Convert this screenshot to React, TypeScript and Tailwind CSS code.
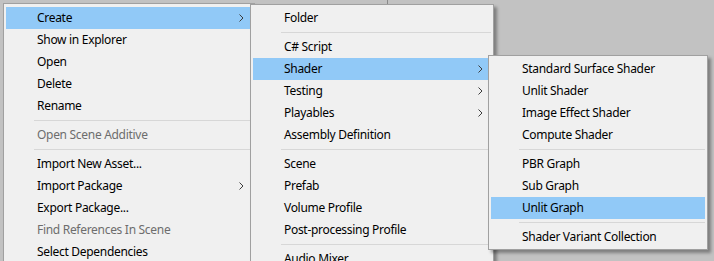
type Item = { label: string; sub?: boolean; disabled?: boolean; active?: boolean } | "sep"

const mainItems: Item[] = [
  { label: "Create", sub: true, active: true },
  { label: "Show in Explorer" },
  { label: "Open" },
  { label: "Delete" },
  { label: "Rename" },
  "sep",
  { label: "Open Scene Additive", disabled: true },
  "sep",
  { label: "Import New Asset..." },
  { label: "Import Package", sub: true },
  { label: "Export Package..." },
  { label: "Find References In Scene", disabled: true },
  { label: "Select Dependencies" },
]

const createItems: Item[] = [
  { label: "Folder" },
  "sep",
  { label: "C# Script" },
  { label: "Shader", sub: true, active: true },
  { label: "Testing", sub: true },
  { label: "Playables", sub: true },
  { label: "Assembly Definition" },
  "sep",
  { label: "Scene" },
  { label: "Prefab" },
  { label: "Volume Profile" },
  { label: "Post-processing Profile" },
  "sep",
  { label: "Audio Mixer" },
]

const shaderItems: Item[] = [
  { label: "Standard Surface Shader" },
  { label: "Unlit Shader" },
  { label: "Image Effect Shader" },
  { label: "Compute Shader" },
  "sep",
  { label: "PBR Graph" },
  { label: "Sub Graph" },
  { label: "Unlit Graph", active: true },
  "sep",
  { label: "Shader Variant Collection" },
]

function Chevron() {
  return (
    <svg width="5" height="8" viewBox="0 0 5 8" className="shrink-0">
      <path d="M0.5 0.5 L4 4 L0.5 7.5" stroke="#3c3c3c" strokeWidth="1" fill="none" />
    </svg>
  )
}

function Menu({ items, className }: { items: Item[]; className: string }) {
  return (
    <div
      className={`absolute bg-[#f0f0f0] border border-[#a0a0a0] px-[2px] shadow-[3px_3px_3px_rgba(0,0,0,0.35)] ${className}`}
    >
      {items.map((item, i) =>
        item === "sep" ? (
          <div key={i} className="h-[7px] flex items-center pl-[28px]">
            <div className="h-px w-full bg-[#d7d7d7]" />
          </div>
        ) : (
          <div
            key={i}
            className={`h-[22px] flex items-center pl-[31px] pr-[8px] ${item.active ? "bg-[#91c9f7]" : ""} ${
              item.disabled ? "text-[#6d6d6d]" : "text-black"
            }`}
          >
            <span className="flex-1 whitespace-nowrap">{item.label}</span>
            {item.sub && <Chevron />}
          </div>
        )
      )}
    </div>
  )
}

export default function App() {
  return (
    <div className="relative w-[714px] h-[261px] overflow-hidden bg-[#c2c2c2] text-[12px] tracking-[-0.3px] font-['Noto_Sans',sans-serif]">
      {/* editor panels behind the menus */}
      <div className="flex h-full">
        <div className="w-[388px] border-r border-[#8a8a8a]" />
        <div className="flex-1" />
      </div>

      <Menu items={mainItems} className="left-[3px] top-[3px] w-[252px] pt-[3px]" />
      <Menu items={createItems} className="left-[250px] top-[4px] w-[244px] pt-[2px]" />
      <Menu items={shaderItems} className="left-[488px] top-[55px] w-[220px] pt-[2px] pb-[1px]" />
    </div>
  )
}
